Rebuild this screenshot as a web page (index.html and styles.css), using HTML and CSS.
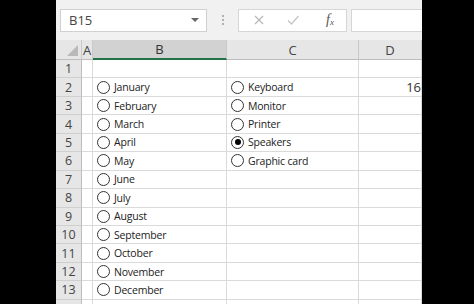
FILE: index.html
```html
<!DOCTYPE html>
<html>
<head>
<meta charset="utf-8">
<link rel="stylesheet" href="styles.css">
</head>
<body>
<div class="frame">
  <div class="toolbar">
    <div class="namebox"><span class="nb-text">B15</span><span class="nb-arrow"></span></div>
    <div class="dots"><i></i><i></i><i></i></div>
    <div class="fxbox">
      <svg class="ic" width="14" height="14" viewBox="0 0 14 14"><path d="M3 3 L11 11 M11 3 L3 11" stroke="#b9b9b9" stroke-width="1.3" fill="none"/></svg>
      <svg class="ic" width="14" height="14" viewBox="0 0 14 14"><path d="M2 7.5 L5.5 11 L12.5 3" stroke="#c4c4c4" stroke-width="1.3" fill="none"/></svg>
      <span class="fx">f<sub>x</sub></span>
    </div>
    <div class="formula"></div>
  </div>
  <div class="sheet">
    <div class="corner"><span class="tri"></span></div>
    <div class="ch">A</div>
    <div class="ch sel">B</div>
    <div class="ch">C</div>
    <div class="ch">D</div>

    <div class="rh">1</div><div class="c"></div><div class="c"></div><div class="c"></div><div class="c"></div>

    <div class="rh">2</div><div class="c"></div>
    <div class="c"><span class="radio"></span>January</div>
    <div class="c"><span class="radio"></span>Keyboard</div>
    <div class="c num">16</div>

    <div class="rh">3</div><div class="c"></div>
    <div class="c"><span class="radio"></span>February</div>
    <div class="c"><span class="radio"></span>Monitor</div>
    <div class="c"></div>

    <div class="rh">4</div><div class="c"></div>
    <div class="c"><span class="radio"></span>March</div>
    <div class="c"><span class="radio"></span>Printer</div>
    <div class="c"></div>

    <div class="rh">5</div><div class="c"></div>
    <div class="c"><span class="radio"></span>April</div>
    <div class="c"><span class="radio on"></span>Speakers</div>
    <div class="c"></div>

    <div class="rh">6</div><div class="c"></div>
    <div class="c"><span class="radio"></span>May</div>
    <div class="c"><span class="radio"></span>Graphic card</div>
    <div class="c"></div>

    <div class="rh">7</div><div class="c"></div>
    <div class="c"><span class="radio"></span>June</div>
    <div class="c"></div><div class="c"></div>

    <div class="rh">8</div><div class="c"></div>
    <div class="c"><span class="radio"></span>July</div>
    <div class="c"></div><div class="c"></div>

    <div class="rh">9</div><div class="c"></div>
    <div class="c"><span class="radio"></span>August</div>
    <div class="c"></div><div class="c"></div>

    <div class="rh">10</div><div class="c"></div>
    <div class="c"><span class="radio"></span>September</div>
    <div class="c"></div><div class="c"></div>

    <div class="rh">11</div><div class="c"></div>
    <div class="c"><span class="radio"></span>October</div>
    <div class="c"></div><div class="c"></div>

    <div class="rh">12</div><div class="c"></div>
    <div class="c"><span class="radio"></span>November</div>
    <div class="c"></div><div class="c"></div>

    <div class="rh">13</div><div class="c"></div>
    <div class="c"><span class="radio"></span>December</div>
    <div class="c"></div><div class="c"></div>

    <div class="rh"></div><div class="c"></div><div class="c"></div><div class="c"></div><div class="c"></div>
  </div>
</div>
</body>
</html>
```

FILE: styles.css
```css
* { box-sizing: border-box; }
html, body { margin: 0; padding: 0; background: #000; }
body { width: 474px; height: 304px; overflow: hidden; }
.frame {
  margin-left: 56px;
  width: 366px;
  height: 304px;
  background: #fff;
  overflow: hidden;
  display: flex;
  flex-direction: column;
  font-family: "Open Sans", "Noto Sans", sans-serif;
}
.toolbar {
  height: 40px;
  flex: none;
  background: #f1f1f1;
  display: flex;
  align-items: center;
  padding-left: 4px;
}
.namebox {
  width: 147px;
  height: 23px;
  background: #fff;
  border: 1px solid #d0d0d0;
  display: flex;
  align-items: center;
  justify-content: space-between;
  padding: 0 7px 0 8px;
  color: #444;
  font-size: 13px;
}
.nb-arrow {
  width: 0; height: 0;
  border-left: 4px solid transparent;
  border-right: 4px solid transparent;
  border-top: 4px solid #666;
}
.dots {
  width: 31px;
  display: flex;
  flex-direction: column;
  align-items: center;
  gap: 2px;
}
.dots i { width: 2px; height: 2px; background: #b0b0b0; display: block; }
.fxbox {
  width: 109px;
  height: 23px;
  background: #fff;
  border: 1px solid #d6d6d6;
  display: flex;
  align-items: center;
  padding-left: 13px;
  gap: 20px;
}
.ic { display: block; }
.fx {
  font-family: "Liberation Serif", serif;
  font-style: italic;
  font-size: 14px;
  color: #555;
  margin-left: 6px;
}
.fx sub { font-size: 9px; vertical-align: -1px; }
.formula {
  margin-left: 4px;
  flex: 1;
  height: 23px;
  background: #fff;
  border: 1px solid #d6d6d6;
  border-right: none;
}
.sheet {
  flex: 1;
  display: grid;
  grid-template-columns: 26px 11px 134px 132px 63px;
  grid-template-rows: 20px repeat(14, 18.45px);
  overflow: hidden;
}
.corner, .ch {
  background: #e6e6e6;
  border-right: 1px solid #c9c9c9;
  border-bottom: 1px solid #bdbdbd;
}
.corner { position: relative; }
.tri {
  position: absolute;
  right: 3px;
  bottom: 3px;
  width: 0; height: 0;
  border-left: 11px solid transparent;
  border-bottom: 11px solid #b9b9b9;
}
.ch {
  display: flex;
  align-items: center;
  justify-content: center;
  font-size: 13px;
  color: #444;
}
.ch.sel {
  background: #d2d2d2;
  border-bottom: 2px solid #217346;
  color: #333;
}
.rh {
  background: #e6e6e6;
  border-right: 1px solid #bdbdbd;
  border-bottom: 1px solid #cfcfcf;
  display: flex;
  align-items: center;
  justify-content: center;
  font-size: 12.5px;
  color: #444;
}
.c {
  border-right: 1px solid #dadada;
  border-bottom: 1px solid #dadada;
  display: flex;
  align-items: center;
  padding-left: 4px;
  gap: 4px;
  font-size: 10.5px;
  letter-spacing: -0.2px;
  color: #222;
  white-space: nowrap;
  overflow: hidden;
}
.c.num {
  justify-content: flex-end;
  padding-right: 0;
  font-size: 13px;
  letter-spacing: 0;
  color: #333;
}
.radio {
  flex: none;
  width: 13px;
  height: 13px;
  border: 1px solid #333;
  border-radius: 50%;
  background: #fff;
  position: relative;
}
.radio.on::after {
  content: "";
  position: absolute;
  left: 2.5px;
  top: 2.5px;
  width: 6px;
  height: 6px;
  border-radius: 50%;
  background: #000;
}
```
